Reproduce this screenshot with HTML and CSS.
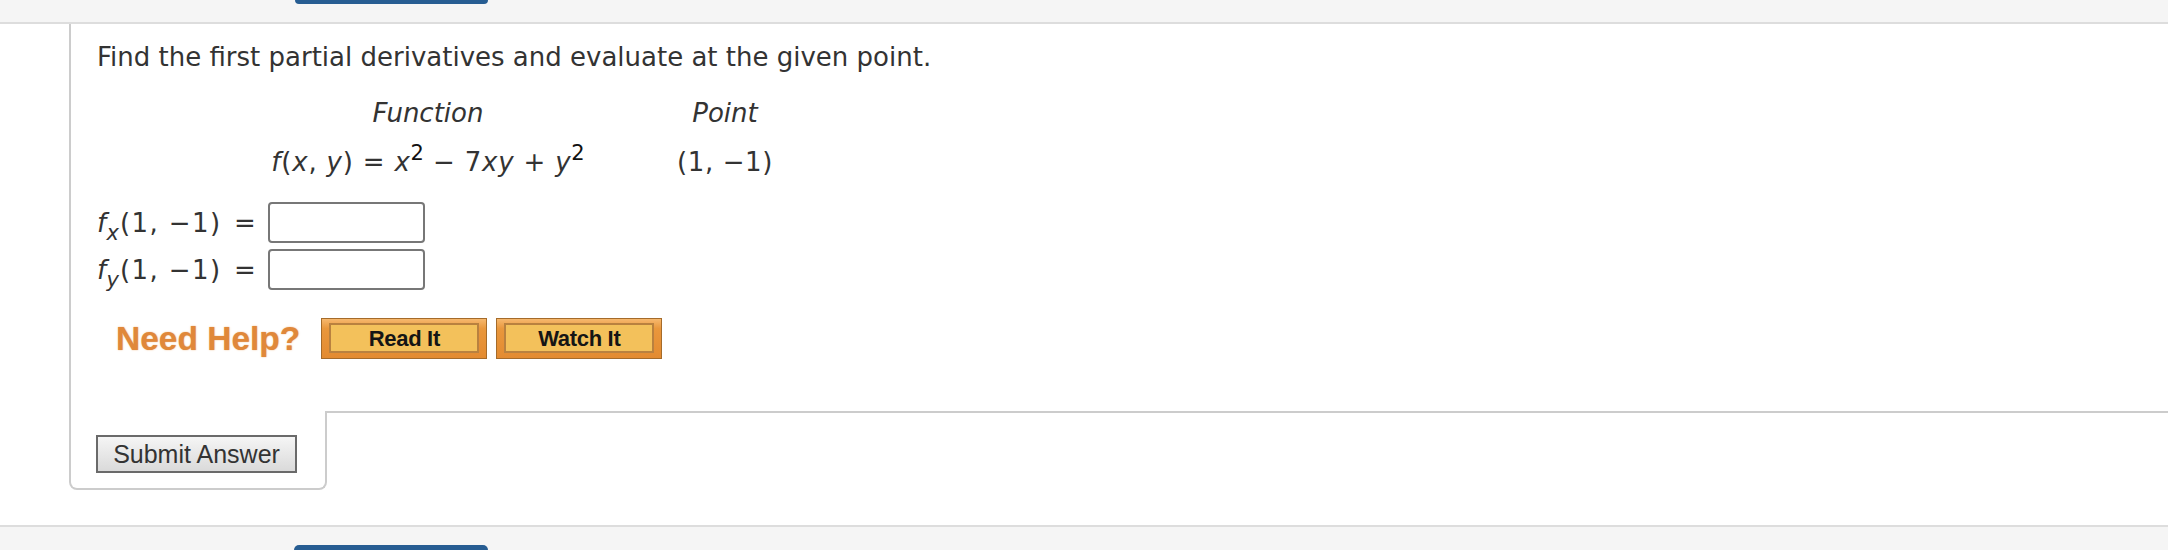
FILE: index.html
```html
<!DOCTYPE html>
<html>
<head>
<meta charset="utf-8">
<link rel="stylesheet" href="styles.css">
</head>
<body>
<div class="topbar"><div class="top-tab"></div></div>
<div class="card">
  <div class="card-main">
    <p class="prompt">Find the first partial derivatives and evaluate at the given point.</p>
    <div class="fn-table">
      <div class="hd">Function</div>
      <div class="hd">Point</div>
      <div class="expr"><i>f</i>(<i>x</i>, <i>y</i>) = <i>x</i><sup>2</sup> − 7<i>xy</i> + <i>y</i><sup>2</sup></div>
      <div class="pt">(1, −1)</div>
    </div>
    <div class="answers">
      <div class="ans-row">
        <span class="lbl"><i>f</i><sub>x</sub>(1, −1)</span><span class="eq">=</span><span class="box"></span>
      </div>
      <div class="ans-row">
        <span class="lbl"><i>f</i><sub>y</sub>(1, −1)</span><span class="eq">=</span><span class="box"></span>
      </div>
    </div>
    <div class="help">
      <span class="need">Need Help?</span>
      <span class="hbtn"><span class="hbtn-in">Read It</span></span>
      <span class="hbtn"><span class="hbtn-in">Watch It</span></span>
    </div>
  </div>
  <div class="card-foot">
    <div class="submit-box"><button class="submit">Submit Answer</button></div>
    <div class="foot-fill"></div>
  </div>
</div>
<div class="bottombar"><div class="bottom-tab"></div></div>
</body>
</html>
```
FILE: styles.css
```css
html, body {
  margin: 0;
  background: #fff;
  overflow: hidden;
}
body {
  font-family: "DejaVu Sans", Verdana, sans-serif;
  color: #333;
}
.topbar {
  height: 22px;
  background: #f5f5f5;
  border-bottom: 2px solid #ddd;
  padding-left: 295px;
}
.top-tab {
  width: 193px;
  height: 4px;
  background: #275d92;
  border-radius: 0 0 6px 6px;
}
.card {
  margin-left: 69px;
}
.card-main {
  border-left: 2px solid #ccc;
  padding: 18px 0 52px 26px;
}
.prompt {
  margin: 0;
  font-size: 26px;
  line-height: 30px;
}
.fn-table {
  display: grid;
  grid-template-columns: 340px 254px;
  row-gap: 19px;
  justify-items: center;
  margin: 26px 0 0 161px;
  font-size: 26px;
  line-height: 30px;
}
.hd {
  font-style: italic;
}
.expr {
  letter-spacing: 0.8px;
}
.pt {
  letter-spacing: 0.6px;
}
.expr sup {
  font-size: 21px;
  line-height: 0;
  vertical-align: 11px;
  color: #111;
  letter-spacing: 0;
}
.answers {
  margin-top: 25px;
  display: flex;
  flex-direction: column;
  gap: 6px;
  font-size: 26px;
  line-height: 30px;
}
.ans-row {
  display: flex;
  align-items: center;
  height: 41px;
}
.lbl {
  width: 137px;
  white-space: nowrap;
  letter-spacing: 1.4px;
}
.lbl sub {
  font-size: 21px;
  font-style: italic;
  line-height: 0;
  vertical-align: -8px;
  letter-spacing: 0;
  margin-left: -1px;
  margin-right: 1px;
}
.eq {
  width: 18px;
  text-align: center;
}
.box {
  margin-left: 16px;
  width: 157px;
  height: 41px;
  box-sizing: border-box;
  border: 2px solid #777;
  border-radius: 4px;
  background: #fff;
}
.help {
  display: flex;
  align-items: center;
  gap: 9px;
  margin: 28px 0 0 19px;
}
.need {
  font-family: "Liberation Sans", Arial, sans-serif;
  font-weight: bold;
  font-size: 33.5px;
  color: #e0883a;
  margin-right: 12px;
  text-shadow: 0 0 1.5px rgba(226, 136, 50, 0.7);
}
.hbtn {
  display: flex;
  width: 166px;
  height: 41px;
  box-sizing: border-box;
  border: 1px solid #a56b2a;
  background: linear-gradient(#f6b86e 0, #e9973c 25%, #e38b31 100%);
  padding: 4px 7px 5px 7px;
}
.hbtn-in {
  flex: 1;
  display: flex;
  align-items: center;
  justify-content: center;
  border: 2px solid #b9813f;
  background: #f3c15b;
  font-family: "Liberation Sans", Arial, sans-serif;
  font-weight: bold;
  font-size: 22px;
  letter-spacing: -0.3px;
  color: #151515;
  padding-top: 1px;
}
.card-foot {
  display: flex;
}
.submit-box {
  width: 258px;
  box-sizing: border-box;
  border: 2px solid #ccc;
  border-top: none;
  border-radius: 0 0 8px 8px;
  padding: 24px 0 15px 25px;
}
.submit {
  display: block;
  width: 201px;
  height: 38px;
  box-sizing: border-box;
  border: 2px solid #6a6a6a;
  border-radius: 0;
  background: linear-gradient(#f5f5f5, #dadada);
  font-family: "Liberation Sans", Arial, sans-serif;
  font-size: 25px;
  color: #333;
  padding: 0;
}
.foot-fill {
  flex: 1;
  border-top: 2px solid #ccc;
}
.bottombar {
  margin-top: 35px;
  border-top: 2px solid #ddd;
  background: #f5f5f5;
  padding: 18px 0 0 294px;
  height: 5px;
}
.bottom-tab {
  width: 194px;
  height: 5px;
  background: #275d92;
  border-radius: 6px 6px 0 0;
}
```
